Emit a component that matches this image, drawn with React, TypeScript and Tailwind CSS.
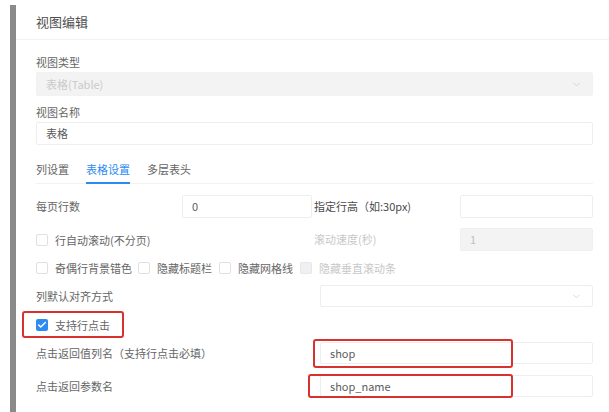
import { ChevronDown, Check } from 'lucide-react'
import type { ReactNode } from 'react'

const font = { fontFamily: '"Noto Sans CJK SC", "Noto Sans", sans-serif' }

function Checkbox({ checked, disabled, label }: { checked?: boolean; disabled?: boolean; label?: string }) {
  return (
    <div className="flex items-center">
      <span
        className={
          checked
            ? 'flex size-[12px] items-center justify-center rounded-[2px] bg-[#2d8cf0]'
            : disabled
              ? 'size-[12px] rounded-[2px] border border-[#e8e8e8] bg-[#f0f0f0]'
              : 'size-[12px] rounded-[2px] border border-[#e0e0e0] bg-white'
        }
      >
        {checked && <Check className="size-[10px] text-white" strokeWidth={3.5} />}
      </span>
      {label && (
        <span className={`ml-[7px] text-[11px] leading-4 ${disabled ? 'text-[#c8c8c8]' : 'text-[#666]'}`}>
          {label}
        </span>
      )}
    </div>
  )
}

function Input({ value, disabled, className = '' }: { value?: string; disabled?: boolean; className?: string }) {
  return (
    <div
      className={`flex items-center rounded-[2px] border px-[9px] text-[11px] ${
        disabled ? 'border-[#efefef] bg-[#f3f3f3] text-[#c0c0c0]' : 'border-[#eeeeee] bg-white text-[#5c5c5c]'
      } ${className}`}
    >
      {value}
    </div>
  )
}

function Select({ value, disabled, className = '' }: { value?: string; disabled?: boolean; className?: string }) {
  return (
    <div
      className={`flex items-center justify-between rounded-[2px] border pl-[9px] pr-[10px] text-[11px] ${
        disabled ? 'border-[#f2f2f2] bg-[#f3f3f3] text-[#cacaca]' : 'border-[#eeeeee] bg-white text-[#5c5c5c]'
      } ${className}`}
    >
      <span>{value}</span>
      <ChevronDown className="size-[11px] text-[#c8c8c8]" strokeWidth={1.5} />
    </div>
  )
}

function Marked({ children, box }: { children: ReactNode; box: string }) {
  return (
    <div className="relative">
      {children}
      <div className={`pointer-events-none absolute rounded-[3px] border-2 border-[#d8312e] ${box}`} />
    </div>
  )
}

export default function App() {
  return (
    <div className="flex h-[412px] w-[609px] overflow-hidden bg-white" style={font}>
      <div className="flex w-[16px] shrink-0 pl-[10px]">
        <div className="mt-[5px] w-[6px] bg-[#8a8a8a]" />
      </div>

      <div className="flex-1">
        <div className="flex h-[40px] items-center border-b border-[#f2f2f2] pl-[20px] pt-[4px] text-[13px] text-[#505050]">
          视图编辑
        </div>

        <div className="pl-[20px] pr-[16px]">
          <div className="mt-[14px] h-[16px] text-[11px] leading-4 text-[#666]">视图类型</div>
          <Select value="表格(Table)" disabled className="mt-[2px] h-[24px]" />

          <div className="mt-[8px] h-[16px] text-[11px] leading-4 text-[#666]">视图名称</div>
          <Input value="表格" className="mt-[2px] h-[23px]" />

          <div className="mt-[12px] flex h-[27px] gap-[17px] border-b border-[#f2f2f2] text-[11px]">
            <div className="-mb-px flex items-center border-b-2 border-transparent text-[#666]">列设置</div>
            <div className="-mb-px flex items-center border-b-2 border-[#2d8cf0] text-[#2d8cf0]">表格设置</div>
            <div className="-mb-px flex items-center border-b-2 border-transparent text-[#666]">多层表头</div>
          </div>

          {/* 每页行数 / 行高 */}
          <div className="mt-[11px] flex h-[23px] items-center text-[11px]">
            <div className="w-[146px] text-[#666]">每页行数</div>
            <Input value="0" className="h-full w-[130px]" />
            <div className="ml-[2px] w-[146px] text-[#4a4a4a]">指定行高（如:30px)</div>
            <Input className="h-full flex-1" />
          </div>

          <div className="mt-[10px] flex h-[23px] items-center text-[11px]">
            <div className="w-[278px]">
              <Checkbox label="行自动滚动(不分页)" />
            </div>
            <div className="w-[146px] text-[#c8c8c8]">滚动速度(秒)</div>
            <Input value="1" disabled className="h-full flex-1" />
          </div>

          <div className="mt-[9px] flex h-[16px] items-center">
            <Checkbox label="奇偶行背景错色" />
            <div className="ml-[6px]">
              <Checkbox label="隐藏标题栏" />
            </div>
            <div className="ml-[7px]">
              <Checkbox label="隐藏网格线" />
            </div>
            <div className="ml-[7px]">
              <Checkbox disabled label="隐藏垂直滚动条" />
            </div>
          </div>

          <div className="mt-[9px] flex h-[22px] items-center text-[11px]">
            <div className="w-[284px] text-[#666]">列默认对齐方式</div>
            <Select className="h-full flex-1" />
          </div>

          <div className="relative mt-[4px] flex h-[27px] items-center">
            <Checkbox checked label="支持行点击" />
            <div className="pointer-events-none absolute -left-[14px] top-0 h-[27px] w-[102px] rounded-[3px] border-2 border-[#d8312e]" />
          </div>

          <div className="mt-[4px] flex h-[22px] items-center text-[11px]">
            <div className="w-[284px] text-[#666]">点击返回值列名（支持行点击必填）</div>
            <div className="h-full flex-1">
              <Marked box="-left-[7px] -top-[3px] h-[29px] w-[200px]">
                <Input value="shop" className="h-[22px]" />
              </Marked>
            </div>
          </div>

          <div className="mt-[11px] flex h-[22px] items-center text-[11px]">
            <div className="w-[284px] text-[#666]">点击返回参数名</div>
            <div className="h-full flex-1">
              <Marked box="-left-[12px] -top-[1px] h-[24px] w-[205px]">
                <Input value="shop_name" className="h-[22px]" />
              </Marked>
            </div>
          </div>
        </div>
      </div>
    </div>
  )
}
